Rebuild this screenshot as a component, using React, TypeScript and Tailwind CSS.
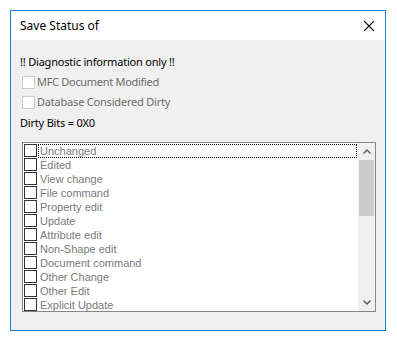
import React from "react";

const items = [
  "Unchanged",
  "Edited",
  "View change",
  "File command",
  "Property edit",
  "Update",
  "Attribute edit",
  "Non-Shape edit",
  "Document command",
  "Other Change",
  "Other Edit",
  "Explicit Update",
];

export default function App() {
  return (
    <div className="w-[397px] h-[341px] bg-white pt-[10px] pl-[10px] overflow-hidden" style={{ fontFamily: '"Noto Sans", "Open Sans", sans-serif' }}>
      <div className="w-[376px] h-[321px] border border-[#1a80d6] bg-[#f0f0f0] flex flex-col">
        <div className="h-[29px] bg-white flex items-center justify-between pl-[9px] pr-[10px]">
          <span className="text-[12px] leading-[16px] text-black">Save Status of</span>
          <svg width="12" height="12" viewBox="0 0 12 12">
            <path d="M1 1 L11 11 M11 1 L1 11" stroke="#111" strokeWidth="1.1" fill="none" />
          </svg>
        </div>
        <div className="flex-1 flex flex-col pl-[9px]">
          <div className="mt-[14px] text-[11px] tracking-[-0.2px] leading-[16px] text-black">!! Diagnostic information only !!</div>
          <div className="mt-[5px] flex items-center h-[14px] pl-[2px]">
            <div className="w-[13px] h-[13px] border border-[#cccccc] bg-white" />
            <span className="ml-[2px] text-[11px] tracking-[-0.3px] leading-[16px] text-[#6d6d6d]">MFC Document Modified</span>
          </div>
          <div className="mt-[6px] flex items-center h-[14px] pl-[2px]">
            <div className="w-[13px] h-[13px] border border-[#cccccc] bg-white" />
            <span className="ml-[2px] text-[11px] tracking-[-0.2px] leading-[16px] text-[#6d6d6d]">Database Considered Dirty</span>
          </div>
          <div className="mt-[6px] text-[11px] tracking-[-0.2px] leading-[16px] text-black">Dirty Bits = 0X0</div>
          <div className="mt-[11px] ml-[2px] w-[354px] h-[170px] border border-[#828790] bg-white flex overflow-hidden">
            <div className="flex-1 flex flex-col pt-[1px] pl-[1px] overflow-hidden" style={{ fontFamily: '"Liberation Sans", Arial, sans-serif' }}>
              {items.map((t, i) => (
                <div key={t} className="h-[14px] flex items-start shrink-0">
                  <div className="w-[13px] h-[13px] border border-[#333333] bg-white shrink-0" />
                  <div
                    className={
                      "flex-1 h-[14px] ml-[1px] mr-[1px] pl-[1px] text-[11px] leading-[12px] text-[#7a7a7a] border " +
                      (i === 0 ? "border-dotted border-black" : "border-transparent")
                    }
                  >
                    {t}
                  </div>
                </div>
              ))}
            </div>
            <div className="w-[17px] h-full bg-[#f0f0f0] flex flex-col">
              <div className="h-[17px] flex items-center justify-center">
                <svg width="8" height="5" viewBox="0 0 8 5">
                  <path d="M0.5 4.5 L4 1 L7.5 4.5" stroke="#606060" strokeWidth="1.5" fill="none" />
                </svg>
              </div>
              <div className="h-[56px] bg-[#cdcdcd] mx-[1px]" />
              <div className="flex-1" />
              <div className="h-[17px] flex items-center justify-center">
                <svg width="8" height="5" viewBox="0 0 8 5">
                  <path d="M0.5 0.5 L4 4 L7.5 0.5" stroke="#606060" strokeWidth="1.5" fill="none" />
                </svg>
              </div>
            </div>
          </div>
        </div>
      </div>
    </div>
  );
}
